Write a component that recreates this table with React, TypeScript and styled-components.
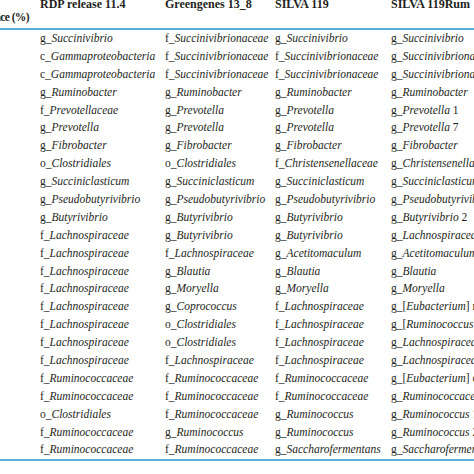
import React from 'react';
import styled, { createGlobalStyle } from 'styled-components';

const GlobalStyle = createGlobalStyle`
    html, body {
        margin: 0;
        padding: 0;
        background: #ffffff;
    }
    body {
        overflow: hidden;
    }
`;

// italic parts are wrapped in *...*
const headers = ['RDP release 11.4', 'Greengenes 13_8', 'SILVA 119', 'SILVA 119Rum'];

const rows: string[][] = [
    ['g_*Succinivibrio*', 'f_*Succinivibrionaceae*', 'g_*Succinivibrio*', 'g_*Succinivibrio*'],
    ['c_*Gammaproteobacteria*', 'f_*Succinivibrionaceae*', 'f_*Succinivibrionaceae*', 'g_*Succinivibrionaceae* UCG-002'],
    ['c_*Gammaproteobacteria*', 'f_*Succinivibrionaceae*', 'f_*Succinivibrionaceae*', 'g_*Succinivibrionaceae* UCG-001'],
    ['g_*Ruminobacter*', 'g_*Ruminobacter*', 'g_*Ruminobacter*', 'g_*Ruminobacter*'],
    ['f_*Prevotellaceae*', 'g_*Prevotella*', 'g_*Prevotella*', 'g_*Prevotella* 1'],
    ['g_*Prevotella*', 'g_*Prevotella*', 'g_*Prevotella*', 'g_*Prevotella* 7'],
    ['g_*Fibrobacter*', 'g_*Fibrobacter*', 'g_*Fibrobacter*', 'g_*Fibrobacter*'],
    ['o_*Clostridiales*', 'o_*Clostridiales*', 'f_*Christensenellaceae*', 'g_*Christensenellaceae* R-7 group'],
    ['g_*Succiniclasticum*', 'g_*Succiniclasticum*', 'g_*Succiniclasticum*', 'g_*Succiniclasticum*'],
    ['g_*Pseudobutyrivibrio*', 'g_*Pseudobutyrivibrio*', 'g_*Pseudobutyrivibrio*', 'g_*Pseudobutyrivibrio*'],
    ['g_*Butyrivibrio*', 'g_*Butyrivibrio*', 'g_*Butyrivibrio*', 'g_*Butyrivibrio* 2'],
    ['f_*Lachnospiraceae*', 'g_*Butyrivibrio*', 'g_*Butyrivibrio*', 'g_*Lachnospiraceae* NK3A20 group'],
    ['f_*Lachnospiraceae*', 'f_*Lachnospiraceae*', 'g_*Acetitomaculum*', 'g_*Acetitomaculum*'],
    ['f_*Lachnospiraceae*', 'g_*Blautia*', 'g_*Blautia*', 'g_*Blautia*'],
    ['f_*Lachnospiraceae*', 'g_*Moryella*', 'g_*Moryella*', 'g_*Moryella*'],
    ['f_*Lachnospiraceae*', 'g_*Coprococcus*', 'f_*Lachnospiraceae*', 'g_[*Eubacterium*] ruminantium group'],
    ['f_*Lachnospiraceae*', 'o_*Clostridiales*', 'f_*Lachnospiraceae*', 'g_[*Ruminococcus*] gauvreauii group'],
    ['f_*Lachnospiraceae*', 'o_*Clostridiales*', 'f_*Lachnospiraceae*', 'g_*Lachnospiraceae* NK4A136 group'],
    ['f_*Lachnospiraceae*', 'f_*Lachnospiraceae*', 'f_*Lachnospiraceae*', 'g_*Lachnospiraceae* UCG-008'],
    ['f_*Ruminococcaceae*', 'f_*Ruminococcaceae*', 'f_*Ruminococcaceae*', 'g_[*Eubacterium*] coprostanoligenes group'],
    ['f_*Ruminococcaceae*', 'f_*Ruminococcaceae*', 'f_*Ruminococcaceae*', 'g_*Ruminococcaceae* UCG-014'],
    ['o_*Clostridiales*', 'f_*Ruminococcaceae*', 'g_*Ruminococcus*', 'g_*Ruminococcus* 1'],
    ['f_*Ruminococcaceae*', 'g_*Ruminococcus*', 'g_*Ruminococcus*', 'g_*Ruminococcus* 2'],
    ['f_*Ruminococcaceae*', 'f_*Ruminococcaceae*', 'g_*Saccharofermentans*', 'g_*Saccharofermentans*'],
];

const Page = styled.div`
    width: 474px;
    height: 474px;
    overflow: hidden;
    font-family: 'Liberation Serif', 'Times New Roman', serif;
    color: #231f20;
`;

const Grid = styled.div`
    display: grid;
    grid-template-columns: 40px 125px 110px 116px 200px;
`;

const Header = styled(Grid)`
    margin-top: -4px;
    height: 32px;
    border-bottom: 2px solid #5aafdd;
`;

const HeadCell = styled.div<{ $first?: boolean }>`
    font-size: ${({ $first }) => ($first ? '11.5px' : '12px')};
    letter-spacing: ${({ $first }) => ($first ? '-0.6px' : '0')};
    font-weight: bold;
    line-height: 14px;
    white-space: nowrap;
    padding-top: ${({ $first }) => ($first ? '0' : '1px')};
    padding-bottom: ${({ $first }) => ($first ? '4px' : '0')};
    align-self: ${({ $first }) => ($first ? 'end' : 'start')};
    justify-self: ${({ $first }) => ($first ? 'end' : 'start')};
    margin-right: ${({ $first }) => ($first ? '11px' : '0')};
`;

const Body = styled.div`
    border-bottom: 2px solid #5aafdd;
`;

const Row = styled(Grid)`
    height: 17.9px;
`;

const Cell = styled.div`
    font-size: 11.5px;
    line-height: 17.9px;
    white-space: nowrap;
`;

const Taxon = styled.i`
    font-style: italic;
`;

const Name: React.FC<{ text: string }> = ({ text }) => (
    <>
        {text.split('*').map((part, i) =>
            i % 2 === 1 ? <Taxon key={i}>{part}</Taxon> : <span key={i}>{part}</span>
        )}
    </>
);

export default function App() {
    return (
        <>
            <GlobalStyle />
            <Page>
                <Header>
                    <HeadCell $first>Relative abundance (%)</HeadCell>
                    {headers.map((h) => (
                        <HeadCell key={h}>{h}</HeadCell>
                    ))}
                </Header>
                <Body>
                    {rows.map((r, i) => (
                        <Row key={i}>
                            <Cell />
                            {r.map((c, j) => (
                                <Cell key={j}>
                                    <Name text={c} />
                                </Cell>
                            ))}
                        </Row>
                    ))}
                </Body>
            </Page>
        </>
    );
}
